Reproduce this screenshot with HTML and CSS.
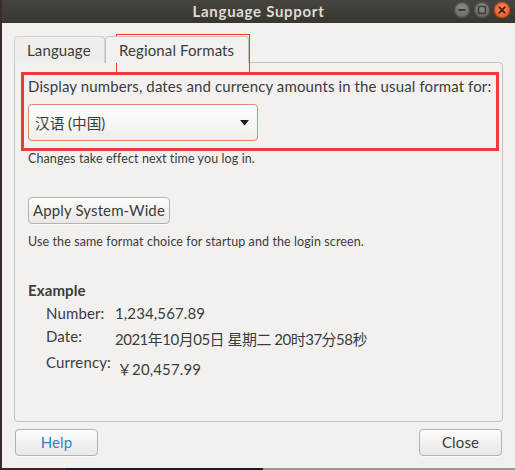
FILE: index.html
```html
<!DOCTYPE html>
<html lang="en">
<head>
<meta charset="utf-8">
<title>Language Support</title>
<link rel="stylesheet" href="styles.css">
</head>
<body>
<div class="screen">
  <div class="window">
    <header class="titlebar">
      <span class="title">Language Support</span>
      <div class="controls">
        <span class="ctl ctl-min"><svg width="16" height="16" viewBox="0 0 16 16"><rect x="4.5" y="7" width="7" height="2" rx="0.5" fill="#3a3935"/></svg></span>
        <span class="ctl ctl-max"><svg width="16" height="16" viewBox="0 0 16 16"><rect x="4.5" y="4.5" width="7" height="7" rx="1" fill="none" stroke="#3a3935" stroke-width="1.5"/></svg></span>
        <span class="ctl ctl-close"><svg width="16" height="16" viewBox="0 0 16 16"><path d="M5.2 5.2 L10.8 10.8 M10.8 5.2 L5.2 10.8" stroke="#4a2412" stroke-width="1.7" stroke-linecap="round"/></svg></span>
      </div>
    </header>
    <main class="content">
      <div class="notebook">
        <div class="tabs">
          <div class="tab">Language</div>
          <div class="tab tab-active">Regional Formats</div>
        </div>
        <div class="panel">
          <p class="lead">Display numbers, dates and currency amounts in the usual format for:</p>
          <div class="combo">
            <span class="combo-text">汉语 (中国)</span>
            <svg class="combo-arrow" width="9" height="6" viewBox="0 0 9 6"><path d="M0 0 H9 L4.5 5.5 Z" fill="#1a1a1a"/></svg>
          </div>
          <p class="note note-first">Changes take effect next time you log in.</p>
          <button class="btn btn-apply">Apply System-Wide</button>
          <p class="note note-second">Use the same format choice for startup and the login screen.</p>
          <h3 class="ex-title">Example</h3>
          <div class="ex-grid">
            <span class="ex-label">Number:</span>
            <span class="ex-value">1,234,567.89</span>
            <span class="ex-label">Date:</span>
            <span class="ex-value ex-date">2021年10月05日 星期二 20时37分58秒</span>
            <span class="ex-label">Currency:</span>
            <span class="ex-value ex-cur">￥20,457.99</span>
          </div>
        </div>
      </div>
      <div class="actions">
        <button class="btn btn-help">Help</button>
        <button class="btn btn-close">Close</button>
      </div>
    </main>
    <div class="mark mark-tab"></div>
    <div class="mark mark-box"></div>
  </div>
  <div class="desk-bottom">
    <span class="desk-a"></span>
    <span class="desk-b"></span>
    <span class="desk-c"></span>
  </div>
</div>
</body>
</html>
```
FILE: styles.css
```css
* { box-sizing: border-box; }
html, body { margin: 0; padding: 0; }
body {
  width: 515px;
  height: 470px;
  overflow: hidden;
  font-family: Lato, "Noto Sans CJK SC", sans-serif;
  font-size: 15px;
  letter-spacing: 0.12px;
  color: #3c3c3c;
  background: #2b2529;
}
.screen {
  width: 515px;
  height: 470px;
  display: flex;
  flex-direction: column;
}
.window {
  position: relative;
  height: 468px;
  border-left: 2px solid #3a2a32;
  background: #f2f1f0;
  display: flex;
  flex-direction: column;
}
.titlebar {
  height: 23px;
  flex: none;
  position: relative;
  background: linear-gradient(#45443f, #37362f);
  display: flex;
  justify-content: center;
  align-items: center;
}
.title {
  font-weight: bold;
  font-size: 15px;
  color: #dfdbd2;
  letter-spacing: 0.7px;
  line-height: 23px;
}
.controls {
  position: absolute;
  right: 5px;
  top: 2px;
  display: flex;
  gap: 4px;
}
.ctl {
  width: 16px;
  height: 16px;
  border-radius: 50%;
  display: block;
}
.ctl svg { display: block; }
.ctl-min, .ctl-max {
  background: radial-gradient(circle at 50% 35%, #8c8b86, #5d5c57);
  box-shadow: inset 0 0 0 1px #4a4945;
}
.ctl-close {
  background: radial-gradient(circle at 50% 35%, #f78652, #e05520);
  box-shadow: inset 0 0 0 1px #b8461c;
}
.content {
  flex: 1;
  display: flex;
  flex-direction: column;
  padding: 13px 12px 12px 12px;
}
.notebook {
  display: flex;
  flex-direction: column;
}
.tabs {
  display: flex;
  height: 26px;
  position: relative;
  z-index: 1;
}
.tab {
  height: 27px;
  padding: 0 12px;
  line-height: 26px;
  border: 1px solid #d3d0cb;
  border-bottom: none;
  border-radius: 4px 4px 0 0;
  background: #efeeec;
  width: 91px;
}
.tab-active {
  width: 144px;
  padding: 0 13px;
  background: #f2f1f0;
  border-color: #c6c3be;
}
.panel {
  height: 360px;
  border: 1px solid #c6c3be;
  border-radius: 0 4px 4px 4px;
  padding: 0 13px;
  display: flex;
  flex-direction: column;
  align-items: flex-start;
}
.lead {
  margin: 14px 0 0 0;
  line-height: 18px;
  white-space: nowrap;
}
.combo {
  margin-top: 9px;
  width: 230px;
  height: 37px;
  border: 1px solid #e38b6b;
  border-radius: 4px;
  background: linear-gradient(#ffffff, #efeeec);
  display: flex;
  align-items: center;
  justify-content: space-between;
  padding: 0 8px 0 6px;
}
.combo-text { font-size: 14.67px; letter-spacing: 0; }
.combo-arrow { display: block; margin-top: 1px; }
.note {
  margin: 0;
  font-size: 12.5px;
  letter-spacing: 0.1px;
  line-height: 16px;
  white-space: nowrap;
}
.note-first { margin-top: 10px; }
.note-second { margin-top: 10px; }
.btn {
  font-family: inherit;
  font-size: 15px;
  letter-spacing: 0.12px;
  color: #3c3c3c;
  border: 1px solid #b4b1ab;
  border-radius: 4px;
  background: linear-gradient(#fcfcfb, #ebe9e6);
  box-shadow: 0 1px 0 rgba(255,255,255,0.6);
  padding: 0;
  height: 27px;
  line-height: 25px;
}
.btn-apply {
  margin-top: 30px;
  width: 142px;
}
.ex-title {
  margin: 31px 0 0 0;
  font-size: 15px;
  font-weight: bold;
  line-height: 18px;
}
.ex-grid {
  margin-top: 5px;
  padding-left: 18px;
  display: grid;
  grid-template-columns: 69px auto;
  grid-template-rows: 18px 21px 25px;
  row-gap: 5px;
  line-height: 18px;
}
.ex-label, .ex-value { white-space: nowrap; }
.ex-date { padding-top: 3px; letter-spacing: -0.5px; }
.ex-cur { padding-top: 7px; padding-left: 2px; }
.actions {
  margin-top: 7px;
  padding: 0 1px;
  display: flex;
  justify-content: space-between;
}
.btn-help, .btn-close { width: 83px; }
.btn-help { color: #1f8ac6; }
.mark {
  position: absolute;
  border-style: solid;
  border-color: #f03a3a;
  pointer-events: none;
}
.mark-tab {
  left: 114px;
  top: 34px;
  width: 134px;
  height: 39px;
  border-width: 1px;
}
.mark-box {
  left: 19px;
  top: 72px;
  width: 478px;
  height: 79px;
  border-width: 3px;
}
.desk-bottom {
  height: 2px;
  display: flex;
}
.desk-a { width: 66px; background: #3a2430; }
.desk-b { width: 197px; background: #1f1e1e; }
.desk-c { flex: 1; background: #9a9895; }
```
